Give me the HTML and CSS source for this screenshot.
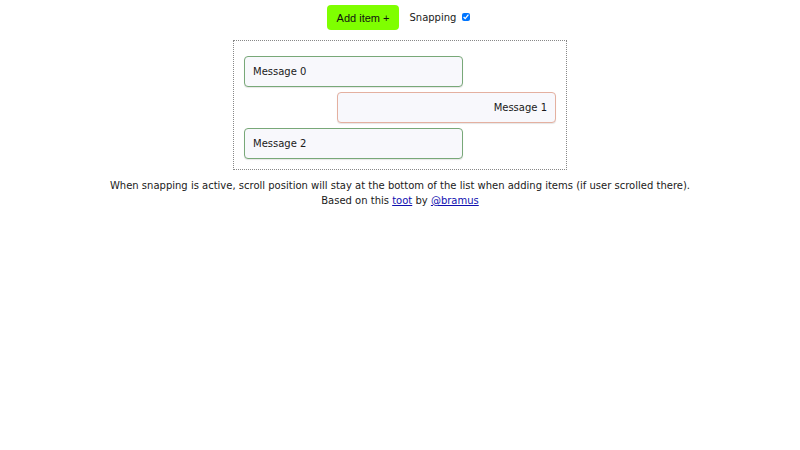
FILE: index.html
```html
<!DOCTYPE html>
<html>
<head>
<meta charset="utf-8">
<link rel="stylesheet" href="styles.css">
</head>
<body>
<div class="toolbar">
  <button class="add-btn">Add item +</button>
  <label class="snap">Snapping <input type="checkbox" checked></label>
</div>
<div class="list">
  <div class="msg msg-left">Message 0</div>
  <div class="msg msg-right">Message 1</div>
  <div class="msg msg-left">Message 2</div>
</div>
<p class="note">When snapping is active, scroll position will stay at the bottom of the list when adding items (if user scrolled there).<br>Based on this <a href="#">toot</a> by <a href="#">@bramus</a></p>
</body>
</html>
```
FILE: styles.css
```css
html, body {
  margin: 0;
  padding: 0;
  background: #fff;
}
body {
  font-family: "DejaVu Sans", sans-serif;
  font-size: 10px;
  color: #1a1a1a;
  padding-top: 5px;
}
.toolbar {
  display: flex;
  justify-content: center;
  align-items: center;
  gap: 10px;
  height: 25px;
}
.add-btn {
  font-family: "Liberation Sans", Arial, sans-serif;
  font-size: 11px;
  background: #7fff00;
  border: none;
  border-radius: 4px;
  height: 25px;
  padding: 0 10px;
  color: #111;
}
.snap {
  display: flex;
  align-items: center;
  gap: 6px;
  margin-right: 3px;
}
.snap input {
  width: 8px;
  height: 8px;
  margin: 0 0 1px 0;
}
.list {
  width: 312px;
  margin: 10px auto 0;
  border: 1px dotted #888;
  padding: 10px;
  display: flex;
  flex-direction: column;
}
.msg {
  width: 219px;
  height: 31px;
  box-sizing: border-box;
  margin-top: 5px;
  border-radius: 4px;
  background: #f8f8fc;
  display: flex;
  align-items: center;
  padding: 0 8px;
  box-shadow: 0 1px 1px rgba(0,0,0,0.1);
}
.msg-left {
  border: 1px solid #78a878;
  align-self: flex-start;
}
.msg-right {
  border: 1px solid #e4b0a0;
  align-self: flex-end;
  justify-content: flex-end;
}
.note {
  margin: 8px 0 0;
  text-align: center;
  line-height: 15px;
}
.note a {
  color: #1010b0;
}
```
